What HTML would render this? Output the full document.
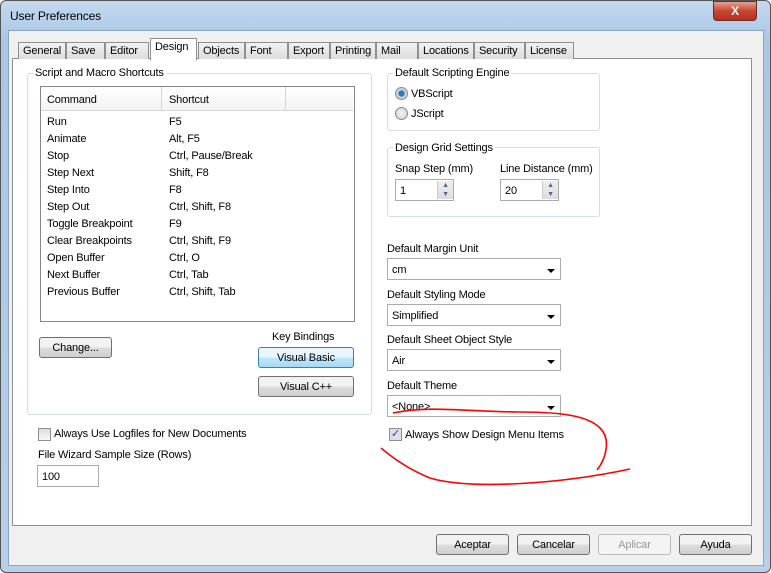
<!DOCTYPE html><html><head><style>
body{margin:0;width:771px;height:573px;overflow:hidden;font-family:"Liberation Sans",sans-serif;font-size:11px;letter-spacing:-0.15px;color:#000;background:#fff}
.a{position:absolute}
.frame{left:0;top:0;width:769px;height:571px;border:1px solid #555;border-radius:6px;background:linear-gradient(#c4d9ef,#a9c6e6 40px,#b6cfea);}
.client{left:8px;top:30px;width:754px;height:534px;background:#f0f0f0;border:1px solid #8da2bd}
.panel{left:12px;top:58px;width:738px;height:466px;background:#fff;border:1px solid #8e8f8f}
.tab{top:42px;height:15px;border:1px solid #8e8f8f;border-bottom:none;background:linear-gradient(#f2f2f2,#dcdcdc);padding:1px 4px 0 4px;font-size:11px;line-height:14px}
.grp{border:1px solid #d5dfe5;border-radius:3px}
.lg{background:#fff;padding:0 2px}
.btn{border:1px solid #707070;border-radius:3px;background:linear-gradient(#f2f2f2 50%,#dddddd 50%,#cfcfcf);text-align:center;line-height:21px;height:19px}
.inp{border:1px solid #abadb3;background:#fff;height:20px;line-height:22px;padding-left:4px}
.arr{width:0;height:0;border-left:4px solid transparent;border-right:4px solid transparent;border-top:4px solid #000}
.radio{width:11px;height:11px;border-radius:50%;border:1px solid #8a8a8a;background:radial-gradient(#f4f4f4,#d0d0d0)}
.sp{width:15px;height:18px;background:linear-gradient(#eee,#ddd);border-left:1px solid #ccc;font-size:7px;color:#4a6a9a;text-align:center;line-height:9px}
</style></head><body>
<div class="a frame"></div>
<div class="a" style="left:10px;top:9px;font-size:12px">User Preferences</div>
<div class="a" style="left:713px;top:1px;width:42px;height:18px;border:1px solid #6b2a22;border-radius:0 0 4px 4px;background:linear-gradient(#e8a093,#c74632 50%,#b8301c);color:#fff;font-weight:bold;text-align:center;line-height:18px;font-size:12px">X</div>
<div class="a client"></div>
<div class="a panel"></div>
<div class="a tab" style="left:18px;width:38px">General</div>
<div class="a tab" style="left:66px;width:29px">Save</div>
<div class="a tab" style="left:105px;width:34px">Editor</div>
<div class="a tab" style="left:150px;top:38px;height:20px;width:37px;background:#fff;border-bottom:1px solid #fff">Design</div>
<div class="a tab" style="left:198px;width:37px">Objects</div>
<div class="a tab" style="left:245px;width:33px">Font</div>
<div class="a tab" style="left:288px;width:32px">Export</div>
<div class="a tab" style="left:330px;width:36px">Printing</div>
<div class="a tab" style="left:376px;width:32px">Mail</div>
<div class="a tab" style="left:418px;width:46px">Locations</div>
<div class="a tab" style="left:474px;width:41px">Security</div>
<div class="a tab" style="left:525px;width:39px">License</div>

<div class="a grp" style="left:27px;top:73px;width:343px;height:340px"></div>
<div class="a lg" style="left:33px;top:67px">Script and Macro Shortcuts</div>
<div class="a" style="left:40px;top:86px;width:313px;height:234px;border:1px solid #828790;background:#fff"></div>
<div class="a" style="left:41px;top:87px;width:312px;height:23px;border-bottom:1px solid #d5d5d5;background:linear-gradient(#fff,#f3f3f3)"></div>
<div class="a" style="left:161px;top:87px;width:1px;height:23px;background:#d5d5d5"></div>
<div class="a" style="left:285px;top:87px;width:1px;height:23px;background:#d5d5d5"></div>
<div class="a" style="left:47px;top:94px">Command</div><div class="a" style="left:169px;top:94px">Shortcut</div>
<div class="a" style="left:47px;top:114px;line-height:17px">Run<br>Animate<br>Stop<br>Step Next<br>Step Into<br>Step Out<br>Toggle Breakpoint<br>Clear Breakpoints<br>Open Buffer<br>Next Buffer<br>Previous Buffer</div>
<div class="a" style="left:169px;top:114px;line-height:17px">F5<br>Alt, F5<br>Ctrl, Pause/Break<br>Shift, F8<br>F8<br>Ctrl, Shift, F8<br>F9<br>Ctrl, Shift, F9<br>Ctrl, O<br>Ctrl, Tab<br>Ctrl, Shift, Tab</div>
<div class="a btn" style="left:39px;top:337px;width:71px">Change...</div>
<div class="a" style="left:272px;top:331px">Key Bindings</div>
<div class="a btn" style="left:258px;top:347px;width:94px;border-color:#3c7fb1;background:linear-gradient(#eaf6fd 50%,#bee6fd 50%,#a7d9f5)">Visual Basic</div>
<div class="a btn" style="left:258px;top:376px;width:94px">Visual C++</div>

<div class="a" style="left:38px;top:428px;width:11px;height:11px;border:1px solid #8e8f8f;background:linear-gradient(#ddd,#f8f8f8)"></div>
<div class="a" style="left:54px;top:428px">Always Use Logfiles for New Documents</div>
<div class="a" style="left:38px;top:449px">File Wizard Sample Size (Rows)</div>
<div class="a inp" style="left:37px;top:465px;width:56px">100</div>

<div class="a grp" style="left:387px;top:73px;width:211px;height:56px"></div>
<div class="a lg" style="left:393px;top:67px">Default Scripting Engine</div>
<div class="a radio" style="left:395px;top:87px;background:radial-gradient(#2a7bc0 35%,#d0d0d0 45%)"></div>
<div class="a" style="left:411px;top:88px">VBScript</div>
<div class="a radio" style="left:395px;top:107px"></div>
<div class="a" style="left:411px;top:108px">JScript</div>
<div class="a grp" style="left:387px;top:147px;width:211px;height:68px"></div>
<div class="a lg" style="left:393px;top:142px">Design Grid Settings</div>
<div class="a" style="left:395px;top:163px">Snap Step (mm)</div>
<div class="a" style="left:500px;top:163px">Line Distance (mm)</div>
<div class="a inp" style="left:395px;top:179px;width:53px">1</div>
<div class="a inp" style="left:500px;top:179px;width:53px">20</div>
<div class="a sp" style="left:437px;top:181px">▲<br>▼</div>
<div class="a sp" style="left:542px;top:181px">▲<br>▼</div>

<div class="a" style="left:387px;top:243px">Default Margin Unit</div>
<div class="a inp" style="left:387px;top:258px;width:168px">cm</div><div class="a arr" style="left:547px;top:269px"></div>
<div class="a" style="left:387px;top:289px">Default Styling Mode</div>
<div class="a inp" style="left:387px;top:304px;width:168px">Simplified</div><div class="a arr" style="left:547px;top:315px"></div>
<div class="a" style="left:387px;top:334px">Default Sheet Object Style</div>
<div class="a inp" style="left:387px;top:349px;width:168px">Air</div><div class="a arr" style="left:547px;top:360px"></div>
<div class="a" style="left:387px;top:380px">Default Theme</div>
<div class="a inp" style="left:387px;top:395px;width:168px">&lt;None&gt;</div><div class="a arr" style="left:547px;top:406px"></div>
<div class="a" style="left:389px;top:428px;width:11px;height:11px;border:1px solid #8e8f8f;background:#dde;color:#2a4a8a;font-size:11px;line-height:11px;text-align:center">✓</div>
<div class="a" style="left:405px;top:429px">Always Show Design Menu Items</div>

<div class="a btn" style="left:436px;top:534px;width:71px">Aceptar</div>
<div class="a btn" style="left:517px;top:534px;width:71px">Cancelar</div>
<div class="a btn" style="left:598px;top:534px;width:71px;color:#999;border-color:#bbb;background:#f4f4f4">Aplicar</div>
<div class="a btn" style="left:679px;top:534px;width:71px">Ayuda</div>

<svg class="a" style="left:0;top:0" width="771" height="573"><g fill="none" stroke="#f00" stroke-width="1.6">
<path d="M393,413 C430,405 470,412 520,412 C570,412 590,418 600,428 C612,440 605,460 597,470"/>
<path d="M381,448 C395,460 410,470 430,478 C470,490 560,484 630,469"/></g></svg>
</body></html>
